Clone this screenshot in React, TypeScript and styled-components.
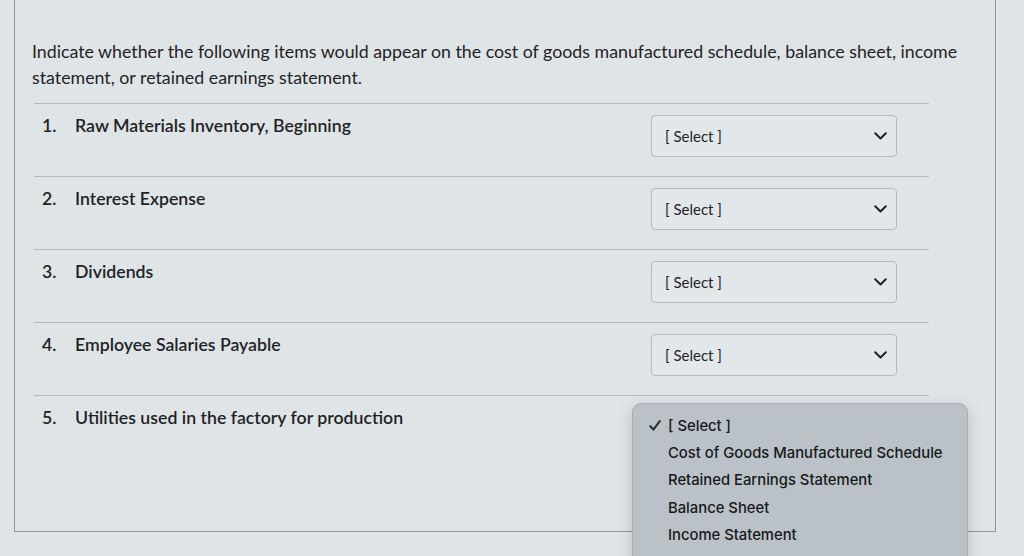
import styled, { createGlobalStyle } from 'styled-components';

const GlobalStyle = createGlobalStyle`
	html, body {
		margin: 0;
		padding: 0;
		background: #dfe5e7;
	}
	body {
		font-family: Lato, "Open Sans", sans-serif;
		color: #1f2326;
	}
`;

const Page = styled.div`
	width: 1024px;
	height: 556px;
	overflow: hidden;
	padding-left: 14px;
	box-sizing: border-box;
`;

const Frame = styled.div`
	width: 982px;
	height: 532px;
	box-sizing: border-box;
	border-left: 1px solid #8f979b;
	border-right: 1px solid #8f979b;
	border-bottom: 1px solid #8f979b;
	padding: 38px 0 0 17px;
`;

const Prompt = styled.p`
	margin: 0;
	font-size: 17.8px;
	line-height: 26px;
	width: 950px;
`;

const Questions = styled.ol`
	list-style: none;
	margin: 13px 0 0 2px;
	padding: 0;
	width: 895px;
`;

const Row = styled.li`
	display: flex;
	justify-content: space-between;
	align-items: flex-start;
	height: 72px;
	border-top: 1px solid #b4bbbf;
`;

const Label = styled.div`
	display: flex;
	padding: 10px 0 0 8px;
	font-size: 17.7px;
	line-height: 24px;
	font-weight: 600;
`;

const Num = styled.span`
	width: 33px;
`;

const SelectWrap = styled.div`
	position: relative;
	width: 246px;
	height: 42px;
	margin: 11px 32px 0 0;
`;

const SelectBox = styled.div`
	width: 100%;
	height: 100%;
	box-sizing: border-box;
	display: flex;
	align-items: center;
	justify-content: space-between;
	padding: 0 9px 0 13px;
	border: 1px solid #b3babe;
	border-radius: 4px;
	background: #e2e8ea;
	font-size: 15px;
`;

const Menu = styled.div`
	position: absolute;
	left: -19px;
	top: -4px;
	width: 336px;
	height: 170px;
	box-sizing: border-box;
	padding: 8px 0 0 16px;
	background: #bac2c7;
	border: 1px solid #a7aeb3;
	border-radius: 9px;
	box-shadow: 0 4px 14px rgba(60, 70, 78, 0.25);
	font-family: Inter, "Liberation Sans", sans-serif;
	font-size: 14.8px;
	font-weight: 500;
	color: #16191b;
	z-index: 2;
`;

const MenuItem = styled.div`
	display: flex;
	align-items: center;
	height: 27.3px;
`;

const CheckCell = styled.span`
	width: 19px;
	display: flex;
	align-items: center;
`;

const Chevron = () => (
	<svg width="13" height="8" viewBox="0 0 13 8" fill="none">
		<polyline points="1.2,1.2 6.5,6.5 11.8,1.2" stroke="#202427" strokeWidth="2" strokeLinecap="round" strokeLinejoin="round" />
	</svg>
);

const Check = () => (
	<svg width="12" height="11" viewBox="0 0 12 11" fill="none">
		<path d="M1.3 6.2 L4.4 9.6 L10.8 1.2" stroke="#2b3033" strokeWidth="2.1" strokeLinecap="round" strokeLinejoin="round" />
	</svg>
);

const items = [
	'Raw Materials Inventory, Beginning',
	'Interest Expense',
	'Dividends',
	'Employee Salaries Payable',
	'Utilities used in the factory for production',
];

const options = [
	'Cost of Goods Manufactured Schedule',
	'Retained Earnings Statement',
	'Balance Sheet',
	'Income Statement',
];

const App = () => {
	const openIndex = items.length - 1;
	return (
		<Page>
			<GlobalStyle />
			<Frame>
				<Prompt>
					Indicate whether the following items would appear on the cost of goods manufactured schedule, balance sheet, income
					statement, or retained earnings statement.
				</Prompt>
				<Questions>
					{items.map((item, i) => (
						<Row key={item}>
							<Label>
								<Num>{i + 1}.</Num>
								{item}
							</Label>
							<SelectWrap>
								{i === openIndex ? (
									<Menu>
										<MenuItem>
											<CheckCell>
												<Check />
											</CheckCell>
											[ Select ]
										</MenuItem>
										{options.map((o) => (
											<MenuItem key={o}>
												<CheckCell />
												{o}
											</MenuItem>
										))}
									</Menu>
								) : (
									<SelectBox>
										[ Select ]
										<Chevron />
									</SelectBox>
								)}
							</SelectWrap>
						</Row>
					))}
				</Questions>
			</Frame>
		</Page>
	);
};

export default App;
